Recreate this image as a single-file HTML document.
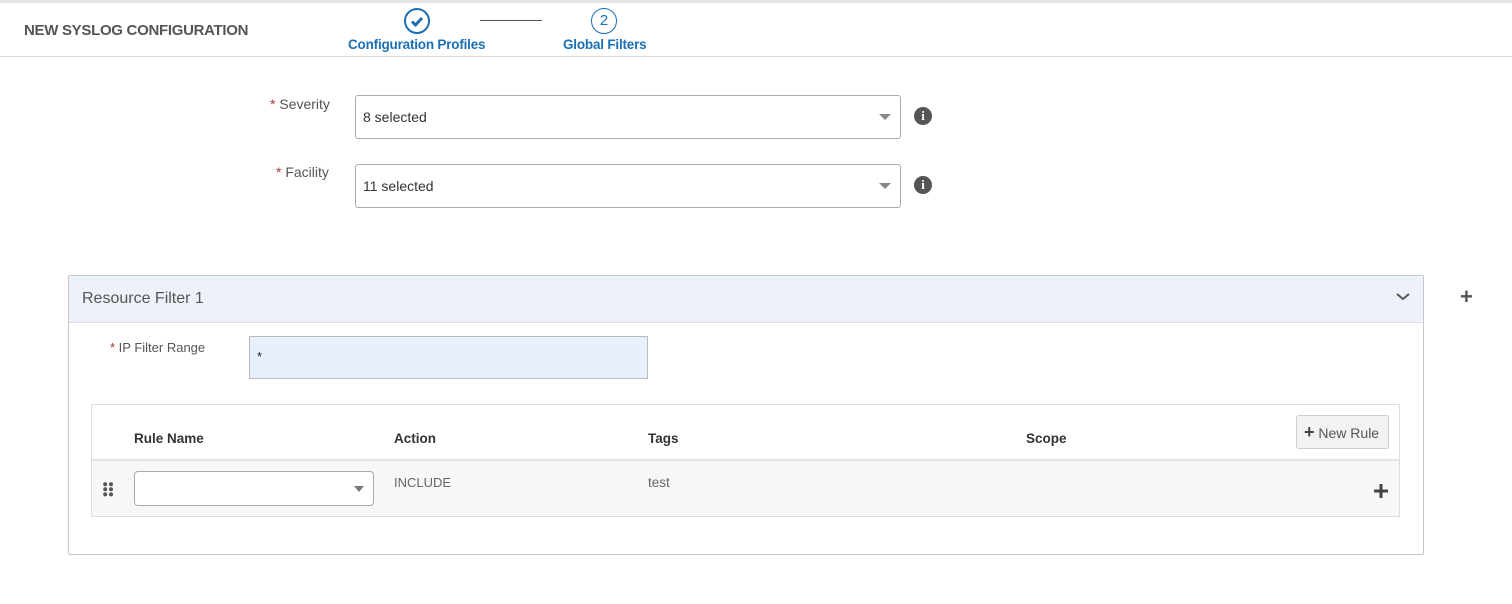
<!DOCTYPE html>
<html><head><meta charset="utf-8"><style>
*{box-sizing:border-box;margin:0;padding:0}
body{width:1512px;height:604px;background:#fff;font-family:"Liberation Sans",sans-serif;position:relative;overflow:hidden;color:#333}
.a{position:absolute}
.sel{position:absolute;border:1px solid #aaa;border-radius:3px;background:#fff;font-size:14px;color:#333;padding-left:7px;display:flex;align-items:center}
.tri{position:absolute;width:0;height:0;border-left:6px solid transparent;border-right:6px solid transparent;border-top:6px solid #888}
.info{position:absolute;width:18px;height:18px;border-radius:50%;background:#555;color:#fff;font:bold 13px "Liberation Serif",serif;text-align:center;line-height:18px}
.lbl{position:absolute;font-size:14px;color:#555}
.req{color:#a33}
.th{position:absolute;font-size:13.5px;font-weight:bold;color:#333}
</style></head><body>
<div class="a" style="left:0;top:0;width:1512px;height:3px;background:#e4e4e4"></div>
<div class="a" style="left:0;top:56px;width:1512px;height:1px;background:#ddd"></div>
<div class="a" style="left:24px;top:22px;font-size:15px;font-weight:bold;color:#555;letter-spacing:-0.3px">NEW SYSLOG CONFIGURATION</div>
<div class="a" style="left:404px;top:8px;width:26px;height:26px;border:2px solid #1a6fb5;border-radius:50%"></div>
<svg class="a" style="left:409px;top:13px" width="16" height="16"><path d="M3 8.5l3.5 3.5 6.5-7" stroke="#1a6fb5" stroke-width="3" fill="none"/></svg>
<div class="a" style="left:480px;top:20px;width:62px;height:1px;background:#555"></div>
<div class="a" style="left:591px;top:8px;width:26px;height:26px;border:1.5px solid #1a6fb5;border-radius:50%;color:#1a6fb5;font-size:15px;text-align:center;line-height:23px">2</div>
<div class="a" style="left:348px;top:37px;font-size:13.5px;font-weight:bold;color:#1a6fb5;letter-spacing:-0.2px">Configuration Profiles</div>
<div class="a" style="left:563px;top:37px;font-size:13.5px;font-weight:bold;color:#1a6fb5;letter-spacing:-0.2px">Global Filters</div>

<div class="lbl" style="left:270px;top:96px"><span class="req">*</span> Severity</div>
<div class="sel" style="left:355px;top:95px;width:546px;height:44px">8 selected</div>
<div class="tri" style="left:879px;top:114px"></div>
<div class="info" style="left:914px;top:107px">i</div>
<div class="lbl" style="left:276px;top:164px"><span class="req">*</span> Facility</div>
<div class="sel" style="left:355px;top:164px;width:546px;height:44px">11 selected</div>
<div class="tri" style="left:879px;top:183px"></div>
<div class="info" style="left:914px;top:176px">i</div>

<div class="a" style="left:68px;top:275px;width:1356px;height:280px;border:1px solid #c8c8c8;border-radius:2px"></div>
<div class="a" style="left:69px;top:276px;width:1354px;height:47px;background:#edf2fa;border-bottom:1px solid #dde"></div>
<div class="a" style="left:82px;top:290px;font-size:16px;color:#555">Resource Filter 1</div>
<svg class="a" style="left:1395px;top:291px" width="16" height="12"><path d="M2 3l6 5 6-5" stroke="#555" stroke-width="2" fill="none"/></svg>
<div class="a" style="left:1460px;top:284px;font-size:22px;font-weight:bold;color:#555">+</div>

<div class="lbl" style="left:110px;top:340px;font-size:13px"><span class="req">*</span> IP Filter Range</div>
<div class="a" style="left:249px;top:336px;width:399px;height:43px;background:#e8f0fe;border:1px solid #bbb;font-size:13px;padding:12px 0 0 7px;color:#222">*</div>

<div class="a" style="left:91px;top:404px;width:1309px;height:113px;border:1px solid #ddd"></div>
<div class="a" style="left:92px;top:459px;width:1307px;height:57px;background:#f7f7f7;border-top:2px solid #e4e4e4"></div>
<div class="th" style="left:134px;top:431px">Rule Name</div>
<div class="th" style="left:394px;top:431px">Action</div>
<div class="th" style="left:648px;top:431px">Tags</div>
<div class="th" style="left:1026px;top:431px">Scope</div>
<div class="a" style="left:1296px;top:415px;width:93px;height:34px;border:1px solid #ccc;border-radius:3px;background:#f2f2f2;font-size:14px;color:#555;padding:9px 0 0 7px"><b style="font-size:18px;line-height:10px;color:#444">+</b> New Rule</div>
<svg class="a" style="left:103px;top:482px" width="12" height="15"><g fill="#555"><circle cx="2.2" cy="2.2" r="2"/><circle cx="8" cy="2.2" r="2"/><circle cx="2.2" cy="7.3" r="2"/><circle cx="8" cy="7.3" r="2"/><circle cx="2.2" cy="12.4" r="2"/><circle cx="8" cy="12.4" r="2"/></g></svg>
<div class="sel" style="left:134px;top:471px;width:240px;height:35px;border-radius:4px"></div>
<div class="tri" style="left:354px;top:486px;border-top-color:#777;border-left-width:5px;border-right-width:5px"></div>
<div class="a" style="left:394px;top:475px;font-size:13px;color:#666">INCLUDE</div>
<div class="a" style="left:648px;top:475px;font-size:13.5px;color:#666">test</div>
<svg class="a" style="left:1373px;top:483px" width="16" height="16"><path d="M8 1v14M1 8h14" stroke="#444" stroke-width="3"/></svg>
</body></html>
